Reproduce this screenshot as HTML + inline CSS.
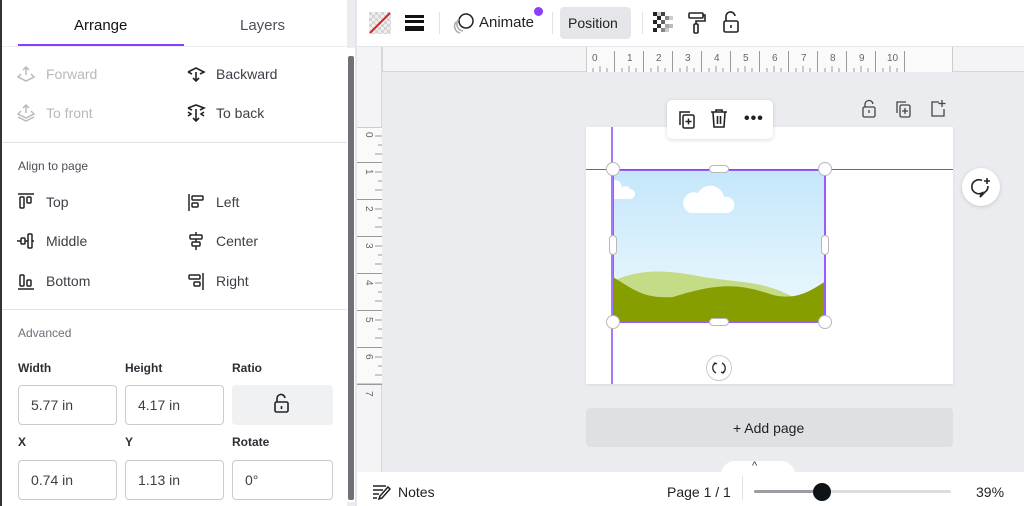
<!DOCTYPE html>
<html><head><meta charset="utf-8"><style>
*{box-sizing:border-box;margin:0;padding:0}
body{width:1024px;height:506px;overflow:hidden;font-family:"Liberation Sans",sans-serif;background:#ebecf0;position:relative;color:#0e1318}
.a{position:absolute}
.lp{left:0;top:0;width:347px;height:506px;background:#fff;border-left:2px solid #333}
.t{font-size:14px;color:#3b3f45}
.ic{position:absolute;width:20px;height:20px}
.lbl{font-size:12px;font-weight:bold;color:#2b2f35}
.in{position:absolute;height:40px;border:1px solid #c8cbd0;border-radius:4px;font-size:14px;color:#3b3f45;padding:11px 12px;background:#fff}
.sec{font-size:12px;color:#6b7079}
</style></head><body>
<div class="a lp">
 <div class="a" style="left:72px;top:17px;font-size:15px;color:#0e1318">Arrange</div>
 <div class="a" style="left:238px;top:17px;font-size:15px;color:#4b5058">Layers</div>
 <div class="a" style="left:16px;top:44px;width:166px;height:2px;background:#8b3dff"></div>
 <div class="a" style="left:0;top:46px;width:345px;height:1px;background:#eee"></div>

 <svg class="ic" style="left:14px;top:64px" viewBox="0 0 20 20" fill="none" stroke="#bbb" stroke-width="1.5"><path d="M10 3v8M7 6l3-3 3 3M5 10l-3 3 8 4 8-4-3-3"/></svg>
 <div class="a t" style="left:44px;top:66px;color:#b5b8bd">Forward</div>
 <svg class="ic" style="left:184px;top:64px" viewBox="0 0 20 20" fill="none" stroke="#222" stroke-width="1.6"><path d="M2 8l8-4 8 4-4 2M6 10L2 8M10 8v9M7 14l3 3 3-3"/></svg>
 <div class="a t" style="left:214px;top:66px">Backward</div>
 <svg class="ic" style="left:14px;top:103px" viewBox="0 0 20 20" fill="none" stroke="#bbb" stroke-width="1.5"><path d="M10 2v8M7 5l3-3 3 3M5 8l-3 3 8 4 8-4-3-3M2 14l8 4 8-4"/></svg>
 <div class="a t" style="left:44px;top:105px;color:#b5b8bd">To front</div>
 <svg class="ic" style="left:184px;top:103px" viewBox="0 0 20 20" fill="none" stroke="#222" stroke-width="1.6"><path d="M2 5l8-3 8 3-4 2M6 7L2 5M2 9l3 2-3 2M18 9l-3 2 3 2M10 6v12M7 15l3 3 3-3"/></svg>
 <div class="a t" style="left:214px;top:105px">To back</div>

 <div class="a" style="left:0;top:142px;width:345px;height:1px;background:#e2e3e6"></div>
 <div class="a sec" style="left:16px;top:159px;color:#4b5058">Align to page</div>

 <svg class="ic" style="left:14px;top:192px" viewBox="0 0 20 20" fill="none" stroke="#222" stroke-width="1.5"><path d="M2 2h16"/><rect x="4" y="5" width="4" height="11" rx="1"/><rect x="11" y="5" width="4" height="6" rx="1"/></svg>
 <div class="a t" style="left:44px;top:194px">Top</div>
 <svg class="ic" style="left:184px;top:192px" viewBox="0 0 20 20" fill="none" stroke="#222" stroke-width="1.5"><path d="M3 2v17"/><rect x="6" y="4" width="11" height="4" rx="1"/><rect x="6" y="11" width="6" height="4" rx="1"/></svg>
 <div class="a t" style="left:214px;top:194px">Left</div>
 <svg class="ic" style="left:14px;top:231px" viewBox="0 0 20 20" fill="none" stroke="#222" stroke-width="1.5"><path d="M1 10h17"/><rect x="5" y="7" width="4" height="6" rx="1" fill="#fff"/><rect x="12" y="3" width="4" height="14" rx="1" fill="#fff"/></svg>
 <div class="a t" style="left:44px;top:233px">Middle</div>
 <svg class="ic" style="left:184px;top:231px" viewBox="0 0 20 20" fill="none" stroke="#222" stroke-width="1.5"><path d="M10 1v18"/><rect x="4" y="4" width="12" height="4" rx="1" fill="#fff"/><rect x="6" y="11" width="8" height="4" rx="1" fill="#fff"/></svg>
 <div class="a t" style="left:214px;top:233px">Center</div>
 <svg class="ic" style="left:14px;top:271px" viewBox="0 0 20 20" fill="none" stroke="#222" stroke-width="1.5"><path d="M2 18h16"/><rect x="4" y="4" width="4" height="11" rx="1"/><rect x="11" y="9" width="4" height="6" rx="1"/></svg>
 <div class="a t" style="left:44px;top:273px">Bottom</div>
 <svg class="ic" style="left:184px;top:271px" viewBox="0 0 20 20" fill="none" stroke="#222" stroke-width="1.5"><path d="M17 2v17"/><rect x="3" y="4" width="11" height="4" rx="1"/><rect x="8" y="11" width="6" height="4" rx="1"/></svg>
 <div class="a t" style="left:214px;top:273px">Right</div>

 <div class="a" style="left:0;top:309px;width:345px;height:1px;background:#e2e3e6"></div>
 <div class="a sec" style="left:16px;top:326px">Advanced</div>
 <div class="a lbl" style="left:16px;top:361px">Width</div>
 <div class="a lbl" style="left:123px;top:361px">Height</div>
 <div class="a lbl" style="left:230px;top:361px">Ratio</div>
 <div class="in" style="left:16px;top:385px;width:99px">5.77 in</div>
 <div class="in" style="left:123px;top:385px;width:99px">4.17 in</div>
 <div class="a" style="left:230px;top:385px;width:101px;height:40px;background:#f0f1f3;border-radius:4px"></div>
 <svg class="a" style="left:270px;top:393px" width="20" height="22" viewBox="0 0 20 22" fill="none" stroke="#222" stroke-width="1.6"><path d="M5 9V6a4 4 0 0 1 8-1"/><rect x="3" y="9" width="13" height="10" rx="1.5"/><path d="M9.5 13v3"/></svg>
 <div class="a lbl" style="left:16px;top:435px">X</div>
 <div class="a lbl" style="left:123px;top:435px">Y</div>
 <div class="a lbl" style="left:230px;top:435px">Rotate</div>
 <div class="in" style="left:16px;top:460px;width:99px">0.74 in</div>
 <div class="in" style="left:123px;top:460px;width:99px">1.13 in</div>
 <div class="in" style="left:230px;top:460px;width:101px">0°</div>
</div>
<div class="a" style="left:347px;top:48px;width:8px;height:454px;background:#fff"></div>
<div class="a" style="left:348px;top:56px;width:6px;height:444px;background:#6f7176;border-radius:2px"></div>
<div class="a" style="left:355px;top:0;width:2px;height:506px;background:#e5e6e9"></div>

<div class="a" style="left:357px;top:0;width:667px;height:47px;background:#fff;border-bottom:1px solid #e4e5e8"></div>
<svg class="a" style="left:369px;top:12px" width="22" height="22"><defs><pattern id="ck" width="6" height="6" patternUnits="userSpaceOnUse"><rect width="6" height="6" fill="#eee"/><rect width="3" height="3" fill="#d4d4d4"/><rect x="3" y="3" width="3" height="3" fill="#d4d4d4"/></pattern></defs><rect width="22" height="22" fill="url(#ck)"/><path d="M1 21L21 1" stroke="#e02020" stroke-width="2"/></svg>
<div class="a" style="left:405px;top:15px;width:19px;height:3px;background:#111"></div>
<div class="a" style="left:405px;top:20px;width:19px;height:3px;background:#111"></div>
<div class="a" style="left:405px;top:26px;width:19px;height:5px;background:#111"></div>
<div class="a" style="left:439px;top:12px;width:1px;height:22px;background:#e2e3e6"></div>
<svg class="a" style="left:452px;top:11px" width="24" height="24" fill="none" stroke="#222" stroke-width="1.5"><ellipse cx="14" cy="10" rx="7" ry="7"/><path d="M7 8a7 7 0 0 0 4 12M4 11a7 7 0 0 0 4 11" stroke="#aaa"/></svg>
<div class="a" style="left:479px;top:14px;font-size:15px;color:#222">Animate</div>
<div class="a" style="left:534px;top:7px;width:9px;height:9px;border-radius:50%;background:#8b3dff"></div>
<div class="a" style="left:552px;top:12px;width:1px;height:22px;background:#e2e3e6"></div>
<div class="a" style="left:560px;top:7px;width:71px;height:32px;background:#e4e6ea;border-radius:4px"></div>
<div class="a" style="left:568px;top:15px;font-size:14px;color:#222">Position</div>
<div class="a" style="left:642px;top:12px;width:1px;height:22px;background:#e2e3e6"></div>
<svg class="a" style="left:653px;top:12px" width="22" height="22"><g fill="#222"><rect x="0" y="0" width="4" height="4"/><rect x="8" y="0" width="4" height="4" fill="#444"/><rect x="4" y="4" width="4" height="4"/><rect x="12" y="4" width="4" height="4" fill="#888"/><rect x="0" y="8" width="4" height="4"/><rect x="8" y="8" width="4" height="4" fill="#666"/><rect x="4" y="12" width="4" height="4" fill="#333"/><rect x="16" y="12" width="4" height="4" fill="#bbb"/><rect x="0" y="16" width="4" height="4"/><rect x="8" y="16" width="4" height="4" fill="#888"/><rect x="12" y="12" width="4" height="4" fill="#aaa"/><rect x="16" y="4" width="4" height="4" fill="#ccc"/><rect x="4" y="0" width="4" height="4" fill="#ccc"/><rect x="12" y="16" width="4" height="4" fill="#ccc"/></g></svg>
<svg class="a" style="left:687px;top:11px" width="20" height="24" fill="none" stroke="#222" stroke-width="1.6"><rect x="2" y="2" width="14" height="5" rx="1"/><path d="M16 4h2v6H9v3"/><rect x="7" y="13" width="4" height="9" rx="1"/></svg>
<svg class="a" style="left:721px;top:10px" width="20" height="24" fill="none" stroke="#222" stroke-width="1.6"><path d="M5 11V7a4.5 4.5 0 0 1 9-1"/><rect x="3" y="11" width="14" height="11" rx="1.5"/><path d="M10 15v3"/></svg>

<div class="a" style="left:357px;top:47px;width:667px;height:25px;background:#f4f4f6;border-bottom:1px solid #d6d7da"></div>
<div class="a" style="left:357px;top:47px;width:25px;height:425px;background:#f4f4f6;border-right:1px solid #d6d7da"></div>
<div class="a" style="left:382px;top:47px;width:1px;height:25px;background:#d6d7da"></div>
<div class="a" style="left:586px;top:47px;width:367px;height:25px;background:#fafafb;border-left:1px solid #ccc;border-right:1px solid #ccc"></div>
<div class="a" style="left:357px;top:127px;width:25px;height:257px;background:#fafafb;border-top:1px solid #ccc;border-bottom:1px solid #ccc"></div>
<svg class="a" style="left:586px;top:47px" width="400" height="25" font-size="10" fill="#666" font-family="Liberation Sans">
<g stroke="#999" stroke-width="1">
<path d="M28.5 4v21M57.5 4v21M86.5 4v21M115.5 4v21M144.5 4v21M173.5 4v21M202.5 4v21M231.5 4v21M260.5 4v21M289.5 4v21M318.5 4v21"/>
<path d="M7 21v4M14 19v6M21 21v4M36 21v4M43 19v6M50 21v4M65 21v4M72 19v6M79 21v4M94 21v4M101 19v6M108 21v4M123 21v4M130 19v6M137 21v4M152 21v4M159 19v6M166 21v4M181 21v4M188 19v6M195 21v4M210 21v4M217 19v6M224 21v4M239 21v4M246 19v6M253 21v4M268 21v4M275 19v6M282 21v4M297 21v4M304 19v6M311 21v4"/>
</g>
<text x="6" y="14">0</text><text x="41" y="14">1</text><text x="70" y="14">2</text><text x="99" y="14">3</text><text x="128" y="14">4</text><text x="157" y="14">5</text><text x="186" y="14">6</text><text x="215" y="14">7</text><text x="244" y="14">8</text><text x="273" y="14">9</text><text x="301" y="14">10</text>
</svg>
<svg class="a" style="left:357px;top:127px" width="25" height="280" font-size="10" fill="#666" font-family="Liberation Sans">
<g stroke="#999"><path d="M0 35.5h25M0 72.5h25M0 109.5h25M0 146.5h25M0 183.5h25M0 220.5h25M0 257.5h25"/>
<path d="M18 9h7M21 18h4M18 27h7M18 45h7M21 54h4M18 63h7M18 82h7M21 91h4M18 100h7M18 119h7M21 128h4M18 137h7M18 156h7M21 165h4M18 174h7M18 193h7M21 202h4M18 211h7M18 230h7M21 239h4M18 248h7"/></g>
<g transform="rotate(90)"><text x="5" y="-9">0</text><text x="42" y="-9">1</text><text x="79" y="-9">2</text><text x="116" y="-9">3</text><text x="153" y="-9">4</text><text x="190" y="-9">5</text><text x="227" y="-9">6</text><text x="264" y="-9">7</text></g>
</svg>

<div class="a" style="left:586px;top:127px;width:367px;height:257px;background:#fff;box-shadow:0 1px 3px rgba(0,0,0,.08)"></div>
<svg class="a" style="left:613px;top:169px" width="213" height="154">
<defs><linearGradient id="sky" x1="0" y1="0" x2="0" y2="1"><stop offset="0" stop-color="#c4e6fb"/><stop offset="1" stop-color="#eef9fd"/></linearGradient></defs>
<rect width="213" height="154" fill="url(#sky)"/>
<path d="M0 12a6 6 0 0 1 8 8a5 5 0 0 1 9 0v0a5 5 0 0 1 0 10H0z" fill="#fff"/>
<path d="M77 44a10 10 0 0 1 8-20a14 14 0 0 1 26 4a8 8 0 0 1 4 16z" fill="#fff"/>
<path d="M0 112C30 98 60 102 90 108C130 114 150 112 180 128L213 154H0z" fill="#c5dc87"/>
<path d="M0 108C20 120 30 130 60 128C110 112 130 116 160 126C185 132 200 120 213 112V154H0z" fill="#869e00"/>
</svg>
<div class="a" style="left:612px;top:169px;width:214px;height:154px;border:2px solid #9b5cff"></div>
<div class="a" style="left:586px;top:169px;width:367px;height:1px;background:#7a55c8"></div>
<div class="a" style="left:611px;top:127px;width:2px;height:257px;background:#a877ff"></div>
<div class="a" style="left:606px;top:162px;width:14px;height:14px;border-radius:50%;background:#fff;border:1px solid #b8b8b8"></div>
<div class="a" style="left:818px;top:162px;width:14px;height:14px;border-radius:50%;background:#fff;border:1px solid #b8b8b8"></div>
<div class="a" style="left:606px;top:315px;width:14px;height:14px;border-radius:50%;background:#fff;border:1px solid #b8b8b8"></div>
<div class="a" style="left:818px;top:315px;width:14px;height:14px;border-radius:50%;background:#fff;border:1px solid #b8b8b8"></div>
<div class="a" style="left:709px;top:165px;width:20px;height:8px;border-radius:4px;background:#fff;border:1px solid #b8b8b8"></div>
<div class="a" style="left:709px;top:318px;width:20px;height:8px;border-radius:4px;background:#fff;border:1px solid #b8b8b8"></div>
<div class="a" style="left:609px;top:235px;width:8px;height:20px;border-radius:4px;background:#fff;border:1px solid #b8b8b8"></div>
<div class="a" style="left:821px;top:235px;width:8px;height:20px;border-radius:4px;background:#fff;border:1px solid #b8b8b8"></div>
<div class="a" style="left:706px;top:355px;width:26px;height:26px;border-radius:50%;background:#fff;border:1px solid #ccc"></div>
<svg class="a" style="left:711px;top:360px" width="16" height="16" fill="none" stroke="#333" stroke-width="1.4"><path d="M4 3a6 6 0 0 0 1 10M12 13a6 6 0 0 0-1-10M3 5l1-2 2 1M13 11l-1 2-2-1"/></svg>

<div class="a" style="left:667px;top:100px;width:106px;height:39px;background:#fff;border-radius:5px;box-shadow:0 1px 4px rgba(0,0,0,.15)"></div>
<svg class="a" style="left:676px;top:109px" width="22" height="22" fill="none" stroke="#222" stroke-width="1.5"><path d="M4 16V3h10"/><rect x="7" y="6" width="11" height="13" rx="1.5"/><path d="M12.5 9.5v6M9.5 12.5h6"/></svg>
<svg class="a" style="left:709px;top:108px" width="20" height="22" fill="none" stroke="#222" stroke-width="1.6"><path d="M2 4h16M7 4V2h6v2M4 4l1 15h10l1-15M8.5 8v8M11.5 8v8"/></svg>
<div class="a" style="left:744px;top:110px;font-size:16px;font-weight:bold;letter-spacing:1px;color:#222">•••</div>

<svg class="a" style="left:860px;top:99px" width="18" height="20" fill="none" stroke="#444" stroke-width="1.3"><path d="M5 8V6a4 4 0 0 1 8-1"/><rect x="3" y="8" width="12" height="10" rx="1.5"/><path d="M9 11v3"/></svg>
<svg class="a" style="left:894px;top:99px" width="18" height="20" fill="none" stroke="#444" stroke-width="1.3"><path d="M3 14V3h9"/><rect x="6" y="6" width="10" height="12" rx="1.5"/><path d="M11 9v6M8 12h6"/></svg>
<svg class="a" style="left:929px;top:98px" width="18" height="20" fill="none" stroke="#444" stroke-width="1.3"><path d="M10 4H3v14h12v-7M13 2v7M9.5 5.5h7"/></svg>

<div class="a" style="left:962px;top:168px;width:38px;height:38px;border-radius:50%;background:#fff;box-shadow:0 1px 4px rgba(0,0,0,.15)"></div>
<svg class="a" style="left:970px;top:176px" width="22" height="22" fill="none" stroke="#222" stroke-width="1.6"><path d="M12 4.5A7 7 0 1 0 12 17l-2 4 5-5a7 7 0 0 0 3-6M17 2v6M14 5h6"/></svg>

<div class="a" style="left:586px;top:408px;width:367px;height:39px;background:#dfe0e4;border-radius:4px"></div>
<div class="a" style="left:733px;top:420px;font-size:14px;color:#222">+ Add page</div>

<div class="a" style="left:721px;top:461px;width:74px;height:14px;background:#fff;border-radius:14px 14px 0 0"></div>
<div class="a" style="left:752px;top:460px;font-size:11px;color:#333">^</div>
<div class="a" style="left:357px;top:472px;width:667px;height:34px;background:#fff"></div>
<svg class="a" style="left:372px;top:483px" width="20" height="18" fill="none" stroke="#222" stroke-width="1.5"><path d="M1 3h13M1 7h10M1 11h6M1 15h4M16 4l2 2-8 9-3 1 1-3z"/></svg>
<div class="a" style="left:398px;top:484px;font-size:14px;color:#222">Notes</div>
<div class="a" style="left:667px;top:484px;font-size:14px;color:#222">Page 1 / 1</div>
<div class="a" style="left:742px;top:476px;width:1px;height:24px;background:#e2e3e6"></div>
<div class="a" style="left:754px;top:490px;width:197px;height:3px;background:#dcdde0;border-radius:2px"></div>
<div class="a" style="left:754px;top:490px;width:68px;height:3px;background:#9a9da2;border-radius:2px"></div>
<div class="a" style="left:813px;top:483px;width:18px;height:18px;border-radius:50%;background:#0e1318"></div>
<div class="a" style="left:976px;top:484px;font-size:14px;color:#222">39%</div>
</body></html>
